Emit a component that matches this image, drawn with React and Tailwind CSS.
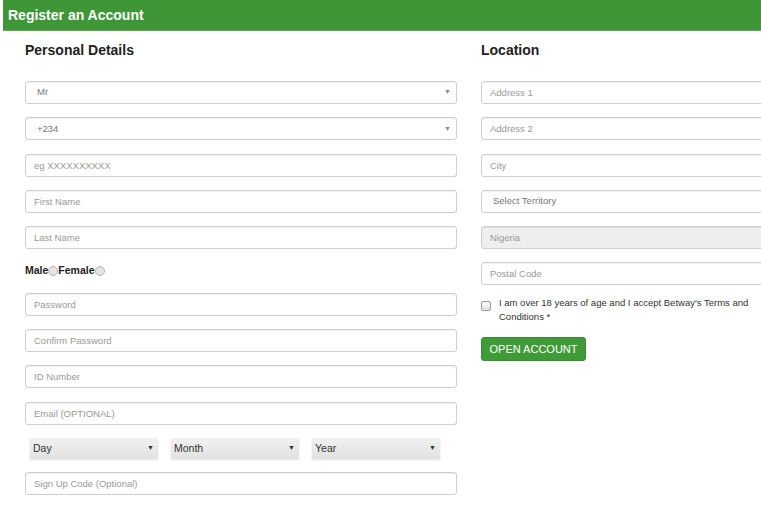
import React from "react";

const font = { fontFamily: '"Liberation Sans", Arial, sans-serif' };

const TextInput = ({ placeholder, disabled, value }) => (
  <input
    className={
      "h-[23px] w-full rounded-[3px] border border-[#cfcfcf] px-[8px] text-[9.5px] text-[#555] shadow-[inset_0_1px_1px_rgba(0,0,0,0.06)] outline-none placeholder:text-[#999] " +
      (disabled ? "bg-[#eeeeee]" : "bg-white")
    }
    placeholder={placeholder}
    defaultValue={value}
    disabled={disabled}
  />
);

const SelectBox = ({ label, arrow = true }) => (
  <div className="flex h-[23px] w-full items-center justify-between rounded-[3px] border border-[#cfcfcf] bg-white pl-[11px] pr-[5px] text-[9.5px] text-[#777] shadow-[inset_0_1px_1px_rgba(0,0,0,0.06)]">
    <span>{label}</span>
    {arrow && <span className="text-[7px] text-[#888]">▼</span>}
  </div>
);

const DateSelect = ({ label }) => (
  <div className="flex h-[21px] w-[128px] items-center justify-between bg-gradient-to-b from-[#f1f1f1] to-[#e2e2e2] pl-[3px] pr-[4px] text-[10.5px] text-[#333] shadow-[0_1px_2px_rgba(0,0,0,0.12)]">
    <span>{label}</span>
    <span className="text-[7px] text-[#333]">▼</span>
  </div>
);

const Radio = () => (
  <span className="inline-block h-[10px] w-[10px] rounded-full border border-[#b5b5b5] bg-[#e4e4e4]" />
);

export default function App() {
  return (
    <div className="h-[513px] w-[761px] overflow-hidden bg-white" style={font}>
      <div className="ml-[3px] flex h-[31px] items-center border-b border-[#5aab52] bg-[#3e9637] pl-[5px] text-[14px] font-bold text-white">
        Register an Account
      </div>
      <div className="flex gap-[24px] pl-[25px] pt-[9px]">
        {/* personal details */}
        <div className="w-[432px] shrink-0">
          <h2 className="h-[20px] text-[14px] leading-[20px] font-bold text-[#222]">Personal Details</h2>
          <div className="mt-[21px] flex flex-col gap-[13.3px]">
            <SelectBox label="Mr" />
            <SelectBox label="+234" />
            <TextInput placeholder="eg XXXXXXXXXX" />
            <TextInput placeholder="First Name" />
            <TextInput placeholder="Last Name" />
            <div className="flex h-[17px] items-center text-[10.5px] font-bold text-[#222]">
              Male<Radio />Female<Radio />
            </div>
            <TextInput placeholder="Password" />
            <TextInput placeholder="Confirm Password" />
            <TextInput placeholder="ID Number" />
            <TextInput placeholder="Email (OPTIONAL)" />
            <div className="flex gap-[13px] pl-[5px]">
              <DateSelect label="Day" />
              <DateSelect label="Month" />
              <DateSelect label="Year" />
            </div>
            <TextInput placeholder="Sign Up Code (Optional)" />
          </div>
        </div>

        {/* location */}
        <div className="w-[432px] shrink-0">
          <h2 className="h-[20px] text-[14px] leading-[20px] font-bold text-[#222]">Location</h2>
          <div className="mt-[21px] flex flex-col gap-[13.3px]">
            <TextInput placeholder="Address 1" />
            <TextInput placeholder="Address 2" />
            <TextInput placeholder="City" />
            <SelectBox label="Select Territory" arrow={false} />
            <TextInput placeholder="Nigeria" disabled />
            <TextInput placeholder="Postal Code" />
          </div>
          <div className="mt-[11px] flex w-[275px] items-start gap-[8px]">
            <span className="mt-[5px] inline-block h-[10px] w-[10px] shrink-0 rounded-[2px] border border-[#999] bg-gradient-to-b from-[#fafafa] to-[#e3e3e3]" />
            <p className="text-[9.5px] leading-[14px] text-[#333]">
              I am over 18 years of age and I accept Betway's Terms and Conditions *
            </p>
          </div>
          <button className="mt-[13px] flex h-[24px] w-[105px] items-center justify-center whitespace-nowrap rounded-[3px] border border-[#398a32] bg-[#3f9b38] text-[11px] text-white">
            OPEN ACCOUNT
          </button>
        </div>
      </div>
    </div>
  );
}
